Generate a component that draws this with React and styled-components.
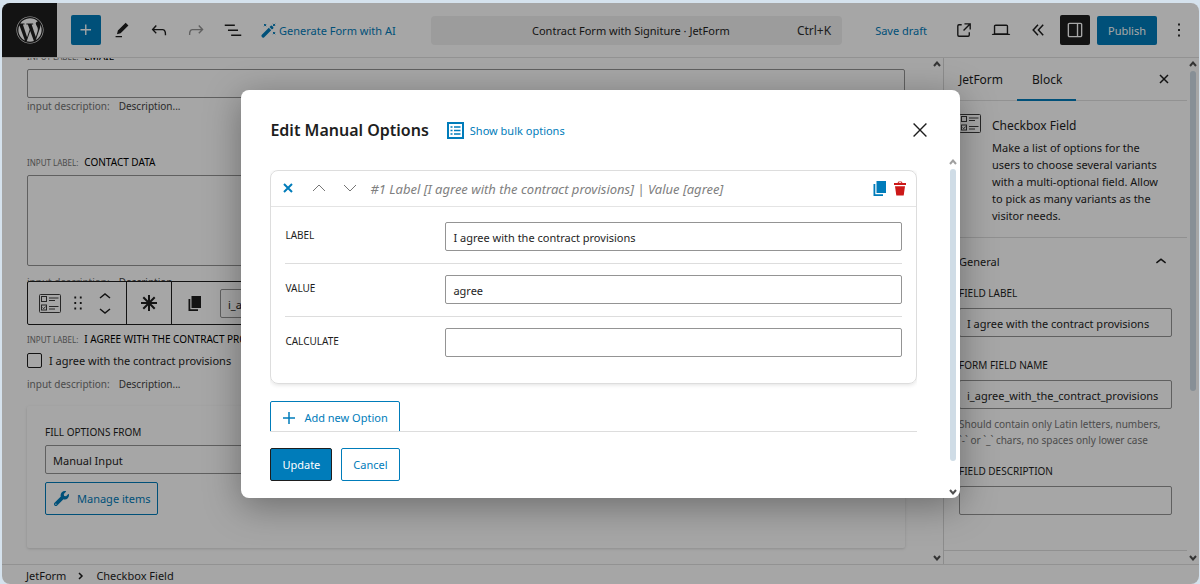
import React from 'react'
import styled, { createGlobalStyle, css } from 'styled-components';
import { FaWordpress, FaWrench } from 'react-icons/fa';

const GlobalStyle = createGlobalStyle`
* {
box-sizing: border-box;
}
body {
margin: 0;
background-color: #d5e2ed;
}
body, button, input, select, textarea {
font-family: "Noto Sans", "Open Sans", sans-serif;
font-size: 11px;
color: #1e1e1e;
}
button {
padding: 0;
border: none;
background: none;
cursor: pointer;
}
h1, h2, p {
margin: 0;
}
svg {
display: block;
flex: none;
}
`;

const Frame = styled.div`
position: relative;
display: flex;
flex-direction: column;
height: calc(100vh - 3px);
margin: 3px 1px 0 2px;
border-radius: 8px;
overflow: hidden;
background-color: white;
`;

/* top bar */
const Header = styled.header`
display: flex;
align-items: center;
height: 55px;
flex: none;
border-bottom: 1px solid #e0e0e0;
`;
const Logo = styled.a`
display: flex;
align-items: center;
justify-content: center;
align-self: stretch;
width: 55px;
background-color: #1e1e1e;
color: white;
`;
const Tools = styled.div`
display: flex;
align-items: center;
gap: 7px;
margin-left: 6px;
`;
const IconButton = styled.button`
display: flex;
align-items: center;
justify-content: center;
width: 30px;
height: 30px;
border-radius: 2px;
background-color: ${(p) => p.$bg || 'transparent'};
color: ${(p) => p.$color || '#1e1e1e'};
`;
const AddButton = styled(IconButton)`
margin-left: 14px;
`;
const TextButton = styled.button`
display: flex;
align-items: center;
gap: 3px;
padding-top: 1px;
color: #007cba;
white-space: nowrap;
`;
const GenerateButton = styled(TextButton)`
margin-left: 13px;
`;
const TitleBar = styled.button`
display: grid;
grid-template-columns: 1fr auto 1fr;
align-items: center;
flex: 1;
height: 29px;
margin: 0 33px 0 35px;
padding: 0 11px 0 0;
border-radius: 4px;
background-color: #f0f0f0;
`;
const Shortcut = styled.span`
grid-column: 3;
justify-self: end;
font-size: 12px;
color: #2f2f2f;
`;
const DocTitle = styled.span`
grid-column: 2;
`;
const HeaderActions = styled.div`
display: flex;
align-items: center;
gap: 7px;
margin-right: 5px;
`;
const SaveButton = styled(TextButton)`
margin-right: 15px;
`;
const PublishButton = styled.button`
height: 29px;
padding: 1px 11px 0;
border-radius: 2px;
background-color: #007cba;
color: white;
`;

/* columns */
const Main = styled.div`
display: flex;
flex: 1;
min-height: 0;
`;
const ScrollBar = styled.div`
display: flex;
flex-direction: column;
align-items: center;
justify-content: space-between;
width: 12px;
flex: none;
padding: 3px 0;
color: #505050;
`;
const Thumb = styled.div`
width: 6px;
height: ${(p) => p.$size};
margin: 4px 0 auto;
border-radius: 3px;
background-color: #cfdce6;
`;
const Canvas = styled.main`
flex: 1;
min-width: 0;
padding: 0 26px 0 25px;
overflow: hidden;
`;
const Field = styled.div`
position: relative;
margin-top: ${(p) => p.$top};
`;
const FieldHead = styled.div`
display: flex;
align-items: center;
gap: 6px;
height: 16px;
margin-bottom: 5px;
white-space: nowrap;
`;
const Hint = styled.span`
font-size: 8px;
color: #757575;
`;
const Caps = styled.label`
font-size: 10px;
line-height: 16px;
text-transform: uppercase;
color: ${(p) => (p.$dark ? '#000' : '#1e1e1e')};
`;
const Description = styled.p`
display: flex;
gap: 9px;
font-size: 10px;
line-height: 16px;
color: #757575;
`;
const DescriptionText = styled.span`
color: #444;
`;
const inputBox = css`
display: block;
width: 100%;
height: 29px;
padding: 2px 7px 0;
border: 1px solid #949494;
border-radius: 2px;
background-color: white;
outline: none;
`;
const Input = styled.input`
${inputBox}
`;
const Area = styled.textarea`
${inputBox}
height: 91px;
margin-bottom: 8px;
resize: none;
`;
const Select = styled.select`
${inputBox}
appearance: none;
`;
const Toolbar = styled.div`
position: absolute;
top: -50px;
left: 0;
display: flex;
height: 44px;
border: 1px solid #1e1e1e;
border-radius: 2px;
background-color: white;
`;
const ToolGroup = styled.div`
display: flex;
align-items: center;
gap: ${(p) => p.$gap || '0'};
padding: 0 ${(p) => p.$pad};
& + & {
border-left: 1px solid #1e1e1e;
}
`;
const Movers = styled.div`
display: flex;
flex-direction: column;
`;
const MoverButton = styled.button`
display: flex;
align-items: center;
justify-content: center;
width: 20px;
height: 15px;
`;
const NameInput = styled(Input)`
width: 180px;
margin-left: 11px;
`;
const Check = styled.label`
display: flex;
align-items: center;
gap: 7px;
height: 17px;
margin-bottom: 7px;
`;
const Box = styled.input`
appearance: none;
width: 15px;
height: 15px;
margin: 0;
border: 1px solid #1e1e1e;
border-radius: 2px;
`;
const Panel = styled.section`
height: 142px;
margin-top: 14px;
padding: 18px;
border-radius: 2px;
box-shadow: 0 1px 3px rgba(0, 0, 0, 0.15);
`;
const OutlineButton = styled.button`
display: flex;
align-items: center;
gap: 8px;
height: 33px;
padding: 1px 11px 0;
border: 1px solid #007cba;
border-radius: 2px;
color: #007cba;
white-space: nowrap;
`;
const ManageButton = styled(OutlineButton)`
margin-top: 8px;
padding: 0 6px 0 8px;
`;
const Crumbs = styled.footer`
display: flex;
align-items: center;
gap: 9px;
height: 20px;
flex: none;
padding: 2px 24px 0;
border-top: 1px solid #e0e0e0;
`;

/* settings sidebar */
const Sidebar = styled.aside`
display: flex;
width: 256px;
flex: none;
border-left: 1px solid #d8d8d8;
`;
const SidebarBody = styled.div`
flex: 1;
min-width: 0;
`;
const Tabs = styled.div`
display: flex;
height: 43px;
padding-right: 8px;
border-bottom: 1px solid #e0e0e0;
`;
const Tab = styled.button`
height: 43px;
padding: 2px 14px 0 15px;
border-bottom: 2px solid ${(p) => (p.$active ? '#007cba' : 'transparent')};
font-size: 12px;
`;
const CloseTab = styled(IconButton)`
margin: 6px 0 0 auto;
`;
const Card = styled.div`
display: flex;
gap: 11px;
padding: 13px 22px 13px 15px;
border-bottom: 1px solid #ddd;
`;
const CardTitle = styled.h2`
padding-top: 1px;
font-size: 12px;
font-weight: 400;
line-height: 22px;
`;
const CardText = styled.p`
padding-top: 2px;
line-height: 17px;
`;
const Group = styled.section`
height: 313px;
padding: 0 15px;
border-bottom: 1px solid #ddd;
`;
const GroupToggle = styled.button`
display: flex;
align-items: center;
justify-content: space-between;
width: 100%;
height: 47px;
`;
const SideField = styled.div`
display: flex;
flex-direction: column;
gap: 7px;
margin-bottom: ${(p) => p.$after || '20px'};
`;
const Help = styled.p`
padding-right: 4px;
font-size: 10px;
line-height: 16px;
color: #757575;
`;
const Code = styled.span`
white-space: nowrap;
`;

/* dialog */
const Overlay = styled.div`
position: absolute;
inset: 0;
display: flex;
align-items: center;
justify-content: center;
background-color: rgba(0, 0, 0, 0.35);
`;
const Modal = styled.div`
display: flex;
flex-direction: column;
width: 60%;
height: 70%;
min-height: 408px;
border-radius: 8px;
overflow: hidden;
background-color: white;
box-shadow: 0 8px 36px rgba(0, 0, 0, 0.35);
`;
const ModalHead = styled.div`
display: flex;
align-items: center;
height: 64px;
flex: none;
padding: 16px 25px 0 29px;
`;
const ModalTitle = styled.h1`
margin-right: 18px;
padding-top: 1px;
font-size: 16px;
font-weight: 600;
`;
const BulkButton = styled(TextButton)`
gap: 6px;
`;
const CloseButton = styled(IconButton)`
margin-left: auto;
`;
const ModalMain = styled.div`
display: flex;
flex: 1;
min-height: 0;
`;
const ModalContent = styled.div`
display: flex;
flex-direction: column;
flex: 1;
min-width: 0;
padding: 16px 30px 0 29px;
`;
const ModalScroll = styled(ScrollBar)`
margin-right: 1px;
padding-top: 5px;
& > svg:first-child {
color: #a0a0a0;
}
`;
const Repeater = styled.div`
flex: 1;
min-height: 0;
overflow: hidden;
border-bottom: 1px solid #ddd;
`;
const Item = styled.div`
border: 1px solid #ddd;
border-radius: 8px;
margin-bottom: 17px;
padding-bottom: 14px;
box-shadow: 0 1px 4px rgba(0, 0, 0, 0.12);
`;
const ItemHead = styled.div`
display: flex;
align-items: center;
height: 36px;
padding: 0 5px 0 7px;
border-bottom: 1px solid #e4e4e4;
`;
const ItemButton = styled.button`
display: flex;
align-items: center;
justify-content: center;
width: ${(p) => p.$w};
height: 22px;
color: ${(p) => p.$color || '#757575'};
`;
const ItemTitle = styled.span`
flex: 1;
margin-left: 10px;
padding-top: 1px;
font-size: 13px;
font-style: italic;
color: #808080;
`;
const Row = styled.div`
display: grid;
grid-template-columns: 160px 1fr;
align-items: start;
margin: 0 14px;
padding: 11px 0 12px;
& + & {
border-top: 1px solid #ddd;
}
&:nth-child(2) {
padding-top: 15px;
}
`;
const RowLabel = styled(Caps)`
padding-top: 5px;
`;
const ModalFoot = styled.div`
display: flex;
gap: 9px;
padding: 16px 0 17px;
`;
const UpdateButton = styled(OutlineButton)`
border-color: #1e1e1e;
background-color: #007cba;
color: white;
`;

const paths = {
  plus: 'M11 12.5V17.5H12.5V12.5H17.5V11H12.5V6H11V11H6V12.5H11Z',
  pencil: 'm19 7-3-3-8.5 8.5-1 4 4-1L19 7Zm-7 11.5H5V20h7v-1.5Z',
  undo: 'M18.3 11.7c-.6-.6-1.4-.9-2.3-.9H6.7l2.9-3.3-1.1-1-4.5 5L8.5 16l1-1-2.7-2.7H16c.5 0 .9.2 1.3.5 1 1 1 3.4 1 4.5v.3h1.5v-.2c0-1.5 0-4.3-1.5-5.7z',
  redo: 'M15.6 6.5l-1.1 1 2.9 3.3H8c-.9 0-1.7.3-2.3.9-1.4 1.5-1.4 4.2-1.4 5.6v.2h1.5v-.3c0-1.1 0-3.5 1-4.5.3-.3.7-.5 1.3-.5h9.2L14.5 15l1.1 1.1 4.6-4.6-4.6-5z',
  list: 'M3 6h11v1.5H3V6Zm3.5 5.5h11V13h-11v-1.5ZM21 17H10v1.5h11V17Z',
  external: 'M19.5 4.5h-7V6h4.44l-5.97 5.97 1.06 1.06L18 7.06v4.44h1.5v-7Zm-13 1a2 2 0 0 0-2 2v10a2 2 0 0 0 2 2h10a2 2 0 0 0 2-2v-3H17v3a.5.5 0 0 1-.5.5h-10a.5.5 0 0 1-.5-.5v-10a.5.5 0 0 1 .5-.5h3V5.5h-3Z',
  desktop: 'M20.5 16h-.7V8c0-1.1-.9-2-2-2H6.2c-1.1 0-2 .9-2 2v8h-.7c-.8 0-1.5.7-1.5 1.5h20c0-.8-.7-1.5-1.5-1.5zM5.7 8c0-.3.2-.5.5-.5h11.6c.3 0 .5.2.5.5v7.6H5.7V8z',
  drawer: 'M18 4H6c-1.1 0-2 .9-2 2v12c0 1.1.9 2 2 2h12c1.1 0 2-.9 2-2V6c0-1.1-.9-2-2-2zm-4 14.5H6c-.3 0-.5-.2-.5-.5V6c0-.3.2-.5.5-.5h8v13zm4.5-.5c0 .3-.2.5-.5.5h-2.5v-13H18c.3 0 .5.2.5.5v12z',
  dots: 'M13 19h-2v-2h2v2zm0-6h-2v-2h2v2zm0-6h-2V5h2v2z',
  up: 'M6.5 12.4L12 8l5.5 4.4-.9 1.2L12 10l-4.5 3.6-1-1.2z',
  drag: 'M8 7h2V5H8v2zm0 6h2v-2H8v2zm0 6h2v-2H8v2zm6-14v2h2V5h-2zm0 8h2v-2h-2v2zm0 6h2v-2h-2v2z',
  close: 'm13.06 12 6.47-6.47-1.06-1.06L12 10.94 5.53 4.47 4.47 5.53 10.94 12l-6.47 6.47 1.06 1.06L12 13.06l6.47 6.47 1.06-1.06L13.06 12Z',
};

const Icon = ({ name, size = 22 }) => (
  <svg width={size} height={size} viewBox="0 0 24 24" fill="currentColor" aria-hidden="true">
    <path d={paths[name]} />
  </svg>
);

const Stroke = ({ d, w, h, width = 2 }) => (
  <svg width={w} height={h} viewBox={`0 0 ${w} ${h}`} fill="none" stroke="currentColor" strokeWidth={width} aria-hidden="true">
    <path d={d} />
  </svg>
);

const Wand = () => (
  <svg width="15" height="15" viewBox="0 0 15 15" fill="currentColor" aria-hidden="true">
    <path d="M.6 12 7.8 4.8l2.4 2.4L3 14.4Q1.800 15 .9 14.1T.6 12Z" />
    <path d="m8.500 4.100 1.300-1.300q.6-.5 1.200 0l1.200 1.200q.5.6 0 1.200l-1.300 1.300Z" />
    <path d="m3 1 2.200 2.200M5.200 1 3 3.200M12 .8 14.200 3M14.200.8 12 3M12 9l2.200 2.200M14.200 9 12 11.200" stroke="currentColor" strokeWidth="1" />
  </svg>
);

const CheckboxBlock = () => (
  <svg width="22" height="19" viewBox="0 0 22 19" fill="none" stroke="#3c3c3c" aria-hidden="true">
    <rect x=".5" y=".5" width="21" height="18" rx="1" />
    <rect x="2.500" y="2.500" width="5" height="5" />
    <rect x="2.500" y="11" width="5" height="5" />
    <path d="m3.600 13.500 1.100 1.200L6.600 12.500M10 4h9.500M10 6.500h6M10 12.500h9.500M10 15h6" />
  </svg>
);

const Copy = ({ size = 15 }) => (
  <svg width={size} height={size} viewBox="0 0 15 15" fill="currentColor" aria-hidden="true">
    <path d="M4.500 0H14v12H4.500ZM1.500 3H3.300v10.300H11V15H1.500Z" />
  </svg>
);

const Trash = () => (
  <svg width="12" height="15" viewBox="0 0 12 15" fill="currentColor" aria-hidden="true">
    <path d="M0 2h3.500L4.500.4h3L8.500 2H12v2H0ZM5 1.300 4.600 2h2.800L7 1.300ZM1 5.200h10l-1.300 9.300H2.300Z" />
  </svg>
);

const ListBox = () => (
  <svg width="17" height="17" viewBox="0 0 17 17" fill="none" stroke="currentColor" aria-hidden="true">
    <rect x="1" y="1" width="15" height="15" strokeWidth="2" />
    <path d="M3.500 5h2M7 5h6.500M3.500 8.500h2M7 8.500h6.500M3.500 12h2M7 12h6.500" strokeWidth="1.500" />
  </svg>
);

const ArrowUp = () => <Stroke w={8} h={6} d="M1 5 4 1.500 7 5" />;
const ArrowDown = () => <Stroke w={8} h={6} d="M1 1 4 4.500 7 1" />;

const rows = [
  { id: 'label', name: 'Label', value: 'I agree with the contract provisions' },
  { id: 'value', name: 'Value', value: 'agree' },
  { id: 'calculate', name: 'Calculate', value: '' },
];

const TopBar = () => (
  <Header>
    <Logo href="#" aria-label="WordPress"><FaWordpress size={28} /></Logo>
    <AddButton $bg="#007cba" $color="white" aria-label="Add block"><Icon name="plus" /></AddButton>
    <Tools>
      <IconButton aria-label="Edit"><Icon name="pencil" /></IconButton>
      <IconButton aria-label="Undo"><Icon name="undo" /></IconButton>
      <IconButton aria-label="Redo" $color="#949494"><Icon name="redo" /></IconButton>
      <IconButton aria-label="List view"><Icon name="list" /></IconButton>
    </Tools>
    <GenerateButton><Wand />Generate Form with AI</GenerateButton>
    <TitleBar>
      <DocTitle>Contract Form with Signiture · JetForm</DocTitle>
      <Shortcut>Ctrl+K</Shortcut>
    </TitleBar>
    <HeaderActions>
      <SaveButton>Save draft</SaveButton>
      <IconButton aria-label="View"><Icon name="external" /></IconButton>
      <IconButton aria-label="Preview"><Icon name="desktop" /></IconButton>
      <IconButton aria-label="Collapse"><Stroke w={12} h={12} width={1.5} d="M6 .8 1.200 6 6 11.200M11.200.8 6.400 6l4.800 5.200" /></IconButton>
      <IconButton $bg="#1e1e1e" $color="white" aria-label="Settings"><Icon name="drawer" /></IconButton>
      <PublishButton>Publish</PublishButton>
      <IconButton aria-label="Options"><Icon name="dots" /></IconButton>
    </HeaderActions>
  </Header>
);

const FormCanvas = () => (
  <Canvas>
    <Field $top="-10px">
      <FieldHead>
        <Hint>INPUT LABEL:</Hint>
        <Caps $dark htmlFor="email">Email</Caps>
      </FieldHead>
      <Input id="email" />
      <Description>input description: <DescriptionText>Description...</DescriptionText></Description>
    </Field>
    <Field $top="40px">
      <FieldHead>
        <Hint>INPUT LABEL:</Hint>
        <Caps $dark htmlFor="contact">Contact data</Caps>
      </FieldHead>
      <Area id="contact" />
      <Description>input description: <DescriptionText>Description...</DescriptionText></Description>
    </Field>
    <Field $top="41px">
      <Toolbar>
        <ToolGroup $pad="11px" $gap="6px">
          <CheckboxBlock />
          <Icon name="drag" />
          <Movers>
            <MoverButton aria-label="Move up"><Stroke w={12} h={6} width={1.5} d="M1 5 6 1l5 4" /></MoverButton>
            <MoverButton aria-label="Move down"><Stroke w={12} h={6} width={1.5} d="m1 1 5 4 5-4" /></MoverButton>
          </Movers>
        </ToolGroup>
        <ToolGroup $pad="7px">
          <IconButton aria-label="Required"><Stroke w={16} h={16} d="M8 0v16M0 8h16M2.300 2.300l11.400 11.400M13.700 2.300 2.300 13.700" /></IconButton>
        </ToolGroup>
        <ToolGroup $pad="7px">
          <IconButton aria-label="Duplicate"><Copy /></IconButton>
          <NameInput aria-label="Field name" defaultValue="i_agree_with_the" />
        </ToolGroup>
      </Toolbar>
      <FieldHead>
        <Hint>INPUT LABEL:</Hint>
        <Caps $dark as="span">I agree with the contract provisions</Caps>
      </FieldHead>
      <Check><Box type="checkbox" />I agree with the contract provisions</Check>
      <Description>input description: <DescriptionText>Description...</DescriptionText></Description>
    </Field>
    <Panel>
      <FieldHead><Caps htmlFor="source">Fill options from</Caps></FieldHead>
      <Select id="source"><option>Manual Input</option></Select>
      <ManageButton><FaWrench size={15} />Manage items</ManageButton>
    </Panel>
  </Canvas>
);

const Settings = () => (
  <Sidebar>
    <SidebarBody>
      <Tabs>
        <Tab>JetForm</Tab>
        <Tab $active>Block</Tab>
        <CloseTab aria-label="Close settings"><Stroke w={10} h={10} width={1.5} d="m1 1 8 8M9 1 1 9" /></CloseTab>
      </Tabs>
      <Card>
        <CheckboxBlock />
        <div>
          <CardTitle>Checkbox Field</CardTitle>
          <CardText>Make a list of options for the users to choose several variants with a multi-optional field. Allow to pick as many variants as the visitor needs.</CardText>
        </div>
      </Card>
      <Group>
        <GroupToggle>General<Icon name="up" /></GroupToggle>
        <SideField>
          <Caps htmlFor="fieldLabel">Field label</Caps>
          <Input id="fieldLabel" defaultValue="I agree with the contract provisions" />
        </SideField>
        <SideField $after="15px">
          <Caps htmlFor="fieldName">Form field name</Caps>
          <Input id="fieldName" defaultValue="i_agree_with_the_contract_provisions" />
          <Help>Should contain only Latin letters, numbers, <Code>`-` or `_`</Code> chars, no spaces only lower case</Help>
        </SideField>
        <SideField>
          <Caps htmlFor="fieldDesc">Field description</Caps>
          <Input id="fieldDesc" />
        </SideField>
      </Group>
    </SidebarBody>
    <ScrollBar><ArrowUp /><Thumb $size="64%" /><ArrowDown /></ScrollBar>
  </Sidebar>
);

const OptionsModal = () => (
  <Overlay>
    <Modal role="dialog" aria-label="Edit Manual Options">
      <ModalHead>
        <ModalTitle>Edit Manual Options</ModalTitle>
        <BulkButton><ListBox />Show bulk options</BulkButton>
        <CloseButton aria-label="Close"><Icon name="close" /></CloseButton>
      </ModalHead>
      <ModalMain>
        <ModalContent>
          <Repeater>
            <Item>
              <ItemHead>
                <ItemButton $w="20px" $color="#007cba" aria-label="Collapse option"><Stroke w={10} h={10} d="m1 1 8 8M9 1 1 9" /></ItemButton>
                <ItemButton $w="42px" aria-label="Move up"><Stroke w={14} h={8} width={1} d="m1 7 6-6 6 6" /></ItemButton>
                <ItemButton $w="20px" aria-label="Move down"><Stroke w={14} h={8} width={1} d="m1 1 6 6 6-6" /></ItemButton>
                <ItemTitle>#1 Label [I agree with the contract provisions] | Value [agree]</ItemTitle>
                <ItemButton $w="21px" $color="#007cba" aria-label="Duplicate option"><Copy /></ItemButton>
                <ItemButton $w="21px" $color="#cc1818" aria-label="Delete option"><Trash /></ItemButton>
              </ItemHead>
              {rows.map((row) => (
                <Row key={row.id}>
                  <RowLabel htmlFor={row.id}>{row.name}</RowLabel>
                  <Input id={row.id} defaultValue={row.value} />
                </Row>
              ))}
            </Item>
            <OutlineButton><Stroke w={14} h={14} width={1.5} d="M7 1v12M1 7h12" />Add new Option</OutlineButton>
          </Repeater>
          <ModalFoot>
            <UpdateButton>Update</UpdateButton>
            <OutlineButton>Cancel</OutlineButton>
          </ModalFoot>
        </ModalContent>
        <ModalScroll><ArrowUp /><Thumb $size="87%" /><ArrowDown /></ModalScroll>
      </ModalMain>
    </Modal>
  </Overlay>
);

const App = () => {
  return (
    <>
      <GlobalStyle />
      <Frame>
        <TopBar />
        <Main>
          <FormCanvas />
          <ScrollBar><ArrowUp /><ArrowDown /></ScrollBar>
          <Settings />
        </Main>
        <Crumbs>
          <span>JetForm</span>
          <Stroke w={12} h={8} width={1.5} d="m4 1 3 3-3 3" />
          <span>Checkbox Field</span>
        </Crumbs>
        <OptionsModal />
      </Frame>
    </>
  )
}

export default App
